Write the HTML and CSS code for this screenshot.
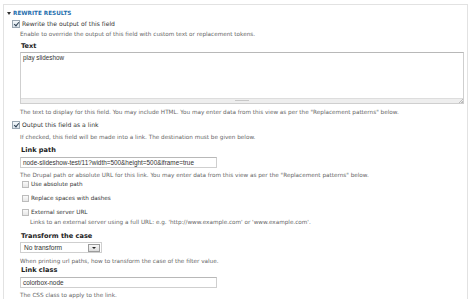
FILE: index.html
```html
<!DOCTYPE html>
<html>
<head>
<meta charset="utf-8">
<link rel="stylesheet" href="styles.css">
</head>
<body>
<div class="fieldset">
  <div class="legend"><span class="tri"></span>REWRITE RESULTS</div>

  <div class="check top-check c1"><span class="box checked"></span><span class="clabel">Rewrite the output of this field</span></div>
  <div class="desc d1">Enable to override the output of this field with custom text or replacement tokens.</div>

  <div class="flabel l-text">Text</div>
  <div class="textarea">
    <div class="ta-text">play slideshow</div>
    <div class="grip"><span class="grip-mark"></span><span class="grip-corner"></span></div>
  </div>
  <div class="desc d2">The text to display for this field. You may include HTML. You may enter data from this view as per the "Replacement patterns" below.</div>

  <div class="check top-check c2"><span class="box checked"></span><span class="clabel">Output this field as a link</span></div>
  <div class="desc d3">If checked, this field will be made into a link. The destination must be given below.</div>

  <div class="flabel l-path">Link path</div>
  <div class="input i1">node-slideshow-test/11?width=500&amp;height=500&amp;iframe=true</div>
  <div class="desc sm d4">The Drupal path or absolute URL for this link. You may enter data from this view as per the "Replacement patterns" below.</div>

  <div class="check sub c3"><span class="box"></span><span class="clabel">Use absolute path</span></div>
  <div class="check sub c4"><span class="box"></span><span class="clabel">Replace spaces with dashes</span></div>
  <div class="check sub c5"><span class="box"></span><span class="clabel">External server URL</span></div>
  <div class="desc sm subdesc d5">Links to an external server using a full URL: e.g. 'http://www.example.com' or 'www.example.com'.</div>

  <div class="flabel l-trans">Transform the case</div>
  <div class="select"><span class="sel-text">No transform</span><span class="sel-btn"><span class="arrow"></span></span></div>
  <div class="desc sm d6">When printing url paths, how to transform the case of the filter value.</div>

  <div class="flabel l-class">Link class</div>
  <div class="input i2">colorbox-node</div>
  <div class="desc sm d7">The CSS class to apply to the link.</div>
</div>
</body>
</html>
```

FILE: styles.css
```css
html, body {
  margin: 0;
  padding: 0;
  background: #ffffff;
}
body {
  font-family: "DejaVu Sans", Verdana, sans-serif;
  color: #333;
  overflow: hidden;
  height: 299px;
}
.fieldset {
  margin: 4px 6px 0 3px;
  border: 1px solid #e2e2e2;
  border-bottom: none;
  height: 295px;
  box-sizing: border-box;
  overflow: hidden;
}
.legend {
  margin-top: 3px;
  margin-left: 3px;
  height: 10px;
  line-height: 10px;
  font-size: 5.7px;
  font-weight: bold;
  color: #1f6fae;
  display: flex;
  align-items: center;
}
.tri {
  width: 0;
  height: 0;
  border-left: 2px solid transparent;
  border-right: 2px solid transparent;
  border-top: 3px solid #333;
  margin-right: 2px;
}
.check {
  display: flex;
  align-items: center;
  height: 10px;
  line-height: 10px;
  font-size: 5.7px;
  color: #333;
}
.top-check { padding-left: 8px; font-size: 6.1px; }
.sub { padding-left: 18px; }
.box {
  width: 7px;
  height: 7px;
  border: 1px solid #bcbcbc;
  background: linear-gradient(#fafafa, #e6e6e6);
  margin-right: 2px;
  position: relative;
  flex: none;
  box-sizing: border-box;
}
.box.checked {
  width: 8px;
  height: 8px;
  background: linear-gradient(#f4f8fb, #d8e2ea);
  border-color: #9aa7b2;
}
.box.checked::after {
  content: "";
  position: absolute;
  left: 2px;
  top: 0px;
  width: 2px;
  height: 4px;
  border-right: 1px solid #2c3e50;
  border-bottom: 1px solid #2c3e50;
  transform: rotate(40deg);
}
.desc {
  margin-left: 16px;
  height: 10px;
  line-height: 10px;
  font-size: 5.7px;
  color: #666;
  white-space: nowrap;
}
.desc.sm { height: 8px; line-height: 8px; }
.desc.subdesc { margin-left: 26px; }
.flabel {
  margin-left: 17px;
  height: 10px;
  line-height: 10px;
  font-size: 6.6px;
  font-weight: bold;
  color: #222;
}
.textarea {
  margin-left: 16px;
  width: 444px;
  height: 52px;
  border: 1px solid #cfcfcf;
  border-top-color: #b8b8b8;
  box-sizing: border-box;
  display: flex;
  flex-direction: column;
  background: #fff;
}
.ta-text {
  flex: 1;
  font-family: "Liberation Sans", Arial, sans-serif;
  font-size: 6.3px;
  line-height: 8px;
  padding: 1px 0 0 2px;
  color: #333;
}
.grip {
  height: 4px;
  background: #eeeeee;
  border-top: 1px solid #dddddd;
  position: relative;
}
.grip-mark {
  position: absolute;
  left: 50%;
  top: 1px;
  width: 14px;
  margin-left: -7px;
  height: 1px;
  background: #c8c8c8;
}
.grip-corner {
  position: absolute;
  right: 0;
  bottom: 0;
  width: 4px;
  height: 4px;
  background: linear-gradient(135deg, transparent 50%, #bbb 50%, #bbb 60%, transparent 60%, transparent 75%, #bbb 75%);
}
.input {
  margin-left: 16px;
  width: 197px;
  height: 11px;
  border: 1px solid #cfcfcf;
  border-top-color: #b8b8b8;
  box-sizing: border-box;
  font-family: "Liberation Sans", Arial, sans-serif;
  font-size: 6.4px;
  line-height: 9px;
  padding-left: 2px;
  color: #333;
  white-space: nowrap;
  overflow: hidden;
}
.select {
  margin-left: 16px;
  width: 82px;
  height: 11px;
  border: 1px solid #cfcfcf;
  box-sizing: border-box;
  display: flex;
  align-items: center;
  font-family: "Liberation Sans", Arial, sans-serif;
  font-size: 6.6px;
  color: #333;
}
.sel-text { flex: 1; padding-left: 3px; }
.sel-btn {
  width: 12px;
  height: 8px;
  margin-right: 1px;
  border: 1px solid #9c9c9c;
  box-sizing: border-box;
  background: linear-gradient(#f8f8f8, #dcdcdc);
  display: flex;
  align-items: center;
  justify-content: center;
}
.arrow {
  width: 0;
  height: 0;
  border-left: 2px solid transparent;
  border-right: 2px solid transparent;
  border-top: 2px solid #222;
}
/* vertical rhythm */
.c1 { margin-top: 1px; }
.l-text { margin-top: 2px; }
.textarea { margin-top: 1px; }
.d2 { margin-top: 3px; }
.c2 { margin-top: 3px; }
.d3 { margin-top: 2px; }
.l-path { margin-top: 3px; }
.i1 { margin-top: 2px; }
.d4 { margin-top: 3px; }
.c3 { margin-top: 0; }
.c4 { margin-top: 4px; }
.c5 { margin-top: 4px; }
.d5 { margin-top: 1px; }
.l-trans { margin-top: 5px; }
.select { margin-top: 1px; }
.d6 { margin-top: 4px; }
.l-class { margin-top: 0; }
.i2 { margin-top: 2px; }
.d7 { margin-top: 3px; }
```
